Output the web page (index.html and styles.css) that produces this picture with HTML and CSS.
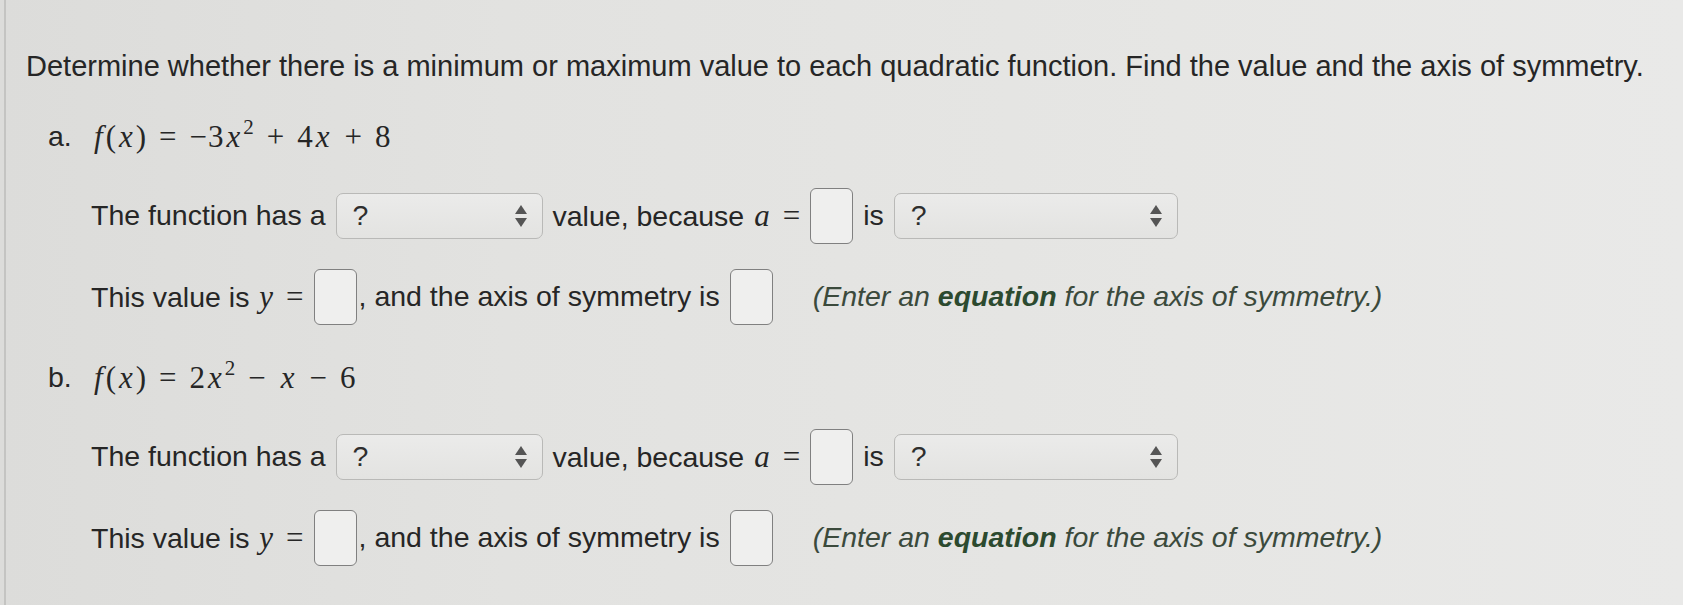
FILE: index.html
```html
<!DOCTYPE html>
<html>
<head>
<meta charset="utf-8">
<link rel="stylesheet" href="styles.css">
</head>
<body>
<div class="page">
  <div class="row title">Determine whether there is a minimum or maximum value to each quadratic function. Find the value and the axis of symmetry.</div>

  <div class="row fn">
    <span class="label">a.</span>
    <span class="math"><i>f</i>(<i>x</i>)<span class="op">=</span>−3<i>x</i><sup>2</sup><span class="op">+</span>4<i>x</i><span class="op">+</span>8</span>
  </div>
  <div class="row line">
    <span>The function has a</span>
    <span class="select s1"><span class="q">?</span><span class="arrows"><span class="up"></span><span class="down"></span></span></span>
    <span>value, because <span class="math"><i>a</i><span class="op">=</span></span></span>
    <span class="box"></span>
    <span>is</span>
    <span class="select s2"><span class="q">?</span><span class="arrows"><span class="up"></span><span class="down"></span></span></span>
  </div>
  <div class="row line">
    <span>This value is <span class="math"><i>y</i><span class="op">=</span></span></span>
    <span class="box"></span>
    <span class="tight">, and the axis of symmetry is</span>
    <span class="box"></span>
    <span class="hint">(Enter an <b>equation</b> for the axis of symmetry.)</span>
  </div>

  <div class="row fn">
    <span class="label">b.</span>
    <span class="math"><i>f</i>(<i>x</i>)<span class="op">=</span>2<i>x</i><sup>2</sup><span class="op">−</span><i>x</i><span class="op">−</span>6</span>
  </div>
  <div class="row line">
    <span>The function has a</span>
    <span class="select s1"><span class="q">?</span><span class="arrows"><span class="up"></span><span class="down"></span></span></span>
    <span>value, because <span class="math"><i>a</i><span class="op">=</span></span></span>
    <span class="box"></span>
    <span>is</span>
    <span class="select s2"><span class="q">?</span><span class="arrows"><span class="up"></span><span class="down"></span></span></span>
  </div>
  <div class="row line">
    <span>This value is <span class="math"><i>y</i><span class="op">=</span></span></span>
    <span class="box"></span>
    <span class="tight">, and the axis of symmetry is</span>
    <span class="box"></span>
    <span class="hint">(Enter an <b>equation</b> for the axis of symmetry.)</span>
  </div>
</div>
</body>
</html>
```

FILE: styles.css
```css
html, body {
  margin: 0;
  padding: 0;
  width: 1683px;
  height: 605px;
  overflow: hidden;
}
body {
  background: linear-gradient(90deg, #dcdcda 0%, #e2e2e0 30%, #e6e6e4 70%, #e9e9e8 100%);
  font-family: "Liberation Sans", Arial, sans-serif;
  font-size: 28.5px;
  color: #262626;
}
.page {
  height: 605px;
  margin-left: 4px;
  border-left: 2px solid #c4c4c2;
  padding: 31px 0 0 20px;
  box-sizing: border-box;
}
.row {
  display: flex;
  align-items: center;
  white-space: nowrap;
}
.title {
  height: 70px;
  font-size: 29px;
  margin-bottom: -5px;
}
.fn {
  height: 81px;
  padding-left: 22px;
}
.fn + .line {
  margin-top: -2px;
}
.label {
  width: 44px;
}
.line {
  height: 81px;
  padding-left: 65px;
  gap: 10px;
}
.math {
  font-family: "Liberation Serif", "Times New Roman", serif;
  font-size: 31px;
  letter-spacing: 1px;
}
.math i {
  font-style: italic;
  padding: 0 2px;
}
.math sup {
  font-size: 21px;
  vertical-align: 13px;
  line-height: 0;
}
.op {
  padding: 0 12px;
}
.line .op {
  padding: 0 0 0 10px;
  letter-spacing: 0;
}
.select {
  display: flex;
  align-items: center;
  justify-content: space-between;
  height: 46px;
  box-sizing: border-box;
  border: 1.5px solid #b9b9b7;
  border-radius: 7px;
  background: linear-gradient(180deg, #ebebea 0%, #e3e3e1 100%);
  padding: 0 15px 0 16px;
}
.s1 { width: 207px; }
.s2 { width: 284px; }
.q {
  color: #2e2e2e;
}
.arrows {
  display: flex;
  flex-direction: column;
  gap: 4px;
}
.up {
  width: 0;
  height: 0;
  border-left: 6px solid transparent;
  border-right: 6px solid transparent;
  border-bottom: 9px solid #555;
}
.down {
  width: 0;
  height: 0;
  border-left: 6px solid transparent;
  border-right: 6px solid transparent;
  border-top: 9px solid #555;
}
.box {
  width: 43px;
  height: 56px;
  box-sizing: border-box;
  border: 1.5px solid #808080;
  border-radius: 6px;
  background: #efefee;
}
.tight {
  margin-left: -8px;
}
.hint {
  margin-left: 30px;
  font-style: italic;
  color: #3b4a3c;
}
.hint b {
  color: #2c4a2f;
}
```
